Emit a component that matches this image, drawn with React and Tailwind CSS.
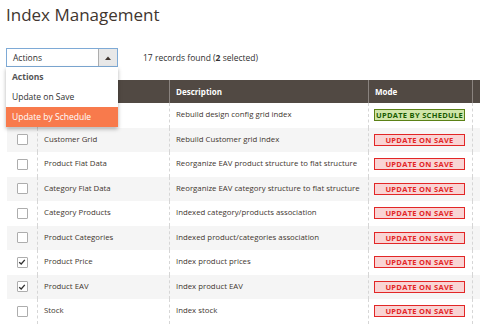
import React from "react";

const rows = [
  { name: "", desc: "Rebuild design config grid index", mode: "schedule", checked: false },
  { name: "Customer Grid", desc: "Rebuild Customer grid index", mode: "save", checked: false },
  { name: "Product Flat Data", desc: "Reorganize EAV product structure to flat structure", mode: "save", checked: false },
  { name: "Category Flat Data", desc: "Reorganize EAV category structure to flat structure", mode: "save", checked: false },
  { name: "Category Products", desc: "Indexed category/products association", mode: "save", checked: false },
  { name: "Product Categories", desc: "Indexed product/categories association", mode: "save", checked: false },
  { name: "Product Price", desc: "Index product prices", mode: "save", checked: true },
  { name: "Product EAV", desc: "Index product EAV", mode: "save", checked: true },
  { name: "Stock", desc: "Index stock", mode: "save", checked: false },
];

function Checkbox({ checked }) {
  return (
    <div className="w-[11px] h-[11px] border border-[#adadad] bg-white flex items-center justify-center rounded-[1px]">
      {checked && (
        <svg width="8" height="8" viewBox="0 0 8 8">
          <path d="M1.2 4.2 L3.2 6 L6.8 1.8" fill="none" stroke="#303030" strokeWidth="1.3" />
        </svg>
      )}
    </div>
  );
}

function Badge({ mode }) {
  if (mode === "schedule") {
    return (
      <div className="w-[91px] h-[12px] border border-[#5b8116] bg-[#d0e5a9] text-[#185b00] text-[7.5px] font-bold leading-[10px] text-center tracking-[0.3px] whitespace-nowrap">
        UPDATE BY SCHEDULE
      </div>
    );
  }
  return (
    <div className="w-[91px] h-[12px] border border-[#e22626] bg-[#f9d4d4] text-[#e22626] text-[7.5px] font-bold leading-[10px] text-center tracking-[0.3px] whitespace-nowrap">
      UPDATE ON SAVE
    </div>
  );
}

export default function App() {
  return (
    <div
      className="w-[480px] h-[324px] overflow-hidden bg-white relative text-[#303030]"
      style={{ fontFamily: "'Open Sans', 'Noto Sans', sans-serif" }}
    >
      <h1 className="pl-[6px] pt-[3px] text-[17px] leading-[24px] font-normal text-[#41362f]">
        Index Management
      </h1>

      <div className="flex items-center mt-[21px] pl-[6px] h-[19px]">
        <div className="w-[112px] h-[19px] flex border border-[#7eaad6] bg-white">
          <div className="flex-1 text-[8.5px] leading-[17px] pl-[6px] text-[#303030]">Actions</div>
          <div className="w-[19px] border-l border-[#adadad] bg-[#e8e8e8] flex items-center justify-center">
            <svg width="6" height="4" viewBox="0 0 6 4">
              <path d="M0 4 L3 0.5 L6 4 Z" fill="#41362f" />
            </svg>
          </div>
        </div>
        <div className="ml-[25px] text-[8.5px] leading-[12px] text-[#303030]">
          17 records found (<span className="font-bold">2</span> selected)
        </div>
      </div>

      <div className="mt-[13px] ml-[7px] w-[480px]">
        <div className="grid grid-cols-[31px_132px_199px_104px_1fr] h-[23px] bg-[#514943] text-white text-[8px] font-bold">
          <div className="border-r border-[#8a837f]" />
          <div className="border-r border-[#8a837f]" />
          <div className="border-r border-[#8a837f] flex items-center pl-[6px]">Description</div>
          <div className="border-r border-[#8a837f] flex items-center pl-[6px]">Mode</div>
          <div />
        </div>
        {rows.map((r, i) => (
          <div
            key={i}
            className={`grid grid-cols-[31px_132px_199px_104px_1fr] h-[24.5px] text-[7.8px] text-[#41362f] ${i % 2 === 1 ? "bg-[#f5f5f5]" : "bg-white"}`}
          >
            <div className="border-r border-dashed border-[#d6d6d6] flex items-center justify-center">
              <Checkbox checked={r.checked} />
            </div>
            <div className="border-r border-dashed border-[#d6d6d6] flex items-center pl-[6px]">{r.name}</div>
            <div className="border-r border-dashed border-[#d6d6d6] flex items-center pl-[6px] whitespace-nowrap overflow-hidden">{r.desc}</div>
            <div className="border-r border-dashed border-[#d6d6d6] flex items-center pl-[5px]">
              <Badge mode={r.mode} />
            </div>
            <div />
          </div>
        ))}
      </div>

      <div className="absolute left-[6px] top-[67px] w-[112px] h-[60px] bg-white shadow-[0_2px_4px_rgba(0,0,0,0.3)] text-[8.5px]">
        <div className="h-[20px] flex items-center pl-[6px] font-bold text-[#555]">Actions</div>
        <div className="h-[20px] flex items-center pl-[6px] text-[#303030]">Update on Save</div>
        <div className="h-[20px] flex items-center pl-[6px] bg-[#f87a4c] text-white">Update by Schedule</div>
      </div>
    </div>
  );
}
